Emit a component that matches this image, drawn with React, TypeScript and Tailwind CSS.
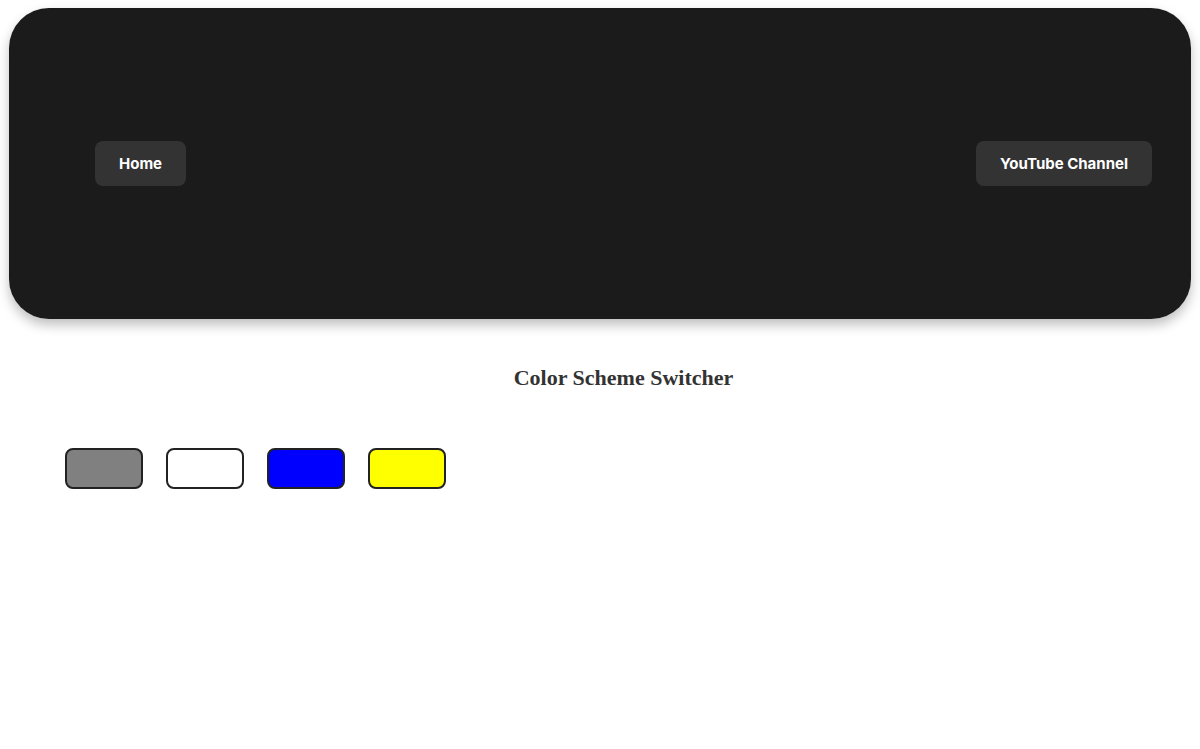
const SWATCHES = ["#808080", "#ffffff", "#0000ff", "#ffff00"];

export default function App() {
  return (
    <div className="min-h-[749px] bg-white pt-2 px-[9px]">
      <header className="h-[311px] rounded-[40px] bg-[#1b1b1b] shadow-[0_6px_12px_rgba(0,0,0,0.25)] flex items-center justify-between pl-[86px] pr-[39px]">
        <a className="h-[45px] px-[24px] rounded-lg bg-[#333333] flex items-center pt-px text-white text-[15px] font-bold font-['Inter',sans-serif]">
          Home
        </a>
        <a className="h-[45px] px-[24px] rounded-lg bg-[#333333] flex items-center pt-px text-white text-[15px] font-bold font-['Inter',sans-serif]">
          YouTube Channel
        </a>
      </header>

      <h2 className="mt-[42px] pl-[47px] text-center text-[22px] font-bold text-[#333333] font-['Liberation_Serif',serif]">
        Color Scheme Switcher
      </h2>

      <div className="mt-[54px] pl-[56px] flex gap-[23px]">
        {SWATCHES.map((color) => (
          <button
            key={color}
            className="w-[78px] h-[41px] rounded-lg border-2 border-[#222222]"
            style={{ backgroundColor: color }}
          />
        ))}
      </div>
    </div>
  );
}
